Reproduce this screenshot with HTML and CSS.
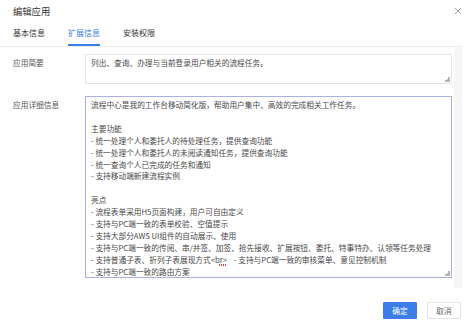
FILE: index.html
```html
<!DOCTYPE html>
<html lang="zh-CN">
<head>
    <meta charset="UTF-8">
    <title>编辑应用</title>
    <link rel="stylesheet" href="styles.css">
</head>
<body>

<div class="dialog">
    <div class="dialog-header">
        <span class="dialog-title">编辑应用</span>
        <svg class="close" width="8" height="8" viewBox="0 0 8 8">
            <path d="M1 1L7 7M7 1L1 7" stroke="#999" stroke-width="0.9" fill="none"/>
        </svg>
    </div>

    <!-- 标签页 -->
    <div class="tabs">
        <span class="tab">基本信息</span>
        <span class="tab active">扩展信息</span>
        <span class="tab">安装权限</span>
    </div>

    <div class="dialog-body">
        <div class="form">
            <div class="form-row">
                <label class="form-label">应用简要</label>
                <div class="textarea short">列出、查询、办理与当前登录用户相关的流程任务。</div>
            </div>
            <div class="form-row">
                <label class="form-label">应用详细信息</label>
                <div class="textarea long focused">流程中心是我的工作台移动简化版，帮助用户集中、高效的完成相关工作任务。

主要功能
- 统一处理个人和委托人的待处理任务，提供查询功能
- 统一处理个人和委托人的未阅读通知任务，提供查询功能
- 统一查询个人已完成的任务和通知
- 支持移动端新建流程实例

亮点
- 流程表单采用H5页面构建，用户可自由定义
- 支持与PC端一致的表单校验、空值提示
- 支持大部分AWS UI组件的自动展示、使用
- 支持与PC端一致的传阅、串/并签、加签、抢先接收、扩展按钮、委托、特事特办、认领等任务处理
- 支持普通子表、折列子表展现方式&lt;br&gt;    - 支持与PC端一致的审核菜单、意见控制机制
- 支持与PC端一致的路由方案</div>
                <span class="typo"></span>
            </div>
        </div>
        <div class="scroll-track"></div>
    </div>

    <div class="dialog-footer">
        <button class="btn primary">确定</button>
        <button class="btn">取消</button>
    </div>
</div>

</body>
</html>
```

FILE: styles.css
```css
body {
    margin: 0;
    font-family: "Noto Sans CJK SC", "Noto Sans", sans-serif;
    background-color: #fff;
}
.dialog {
    width: 474px;
    height: 330px;
    background-color: #fff;
}
.dialog-header {
    display: flex;
    justify-content: space-between;
    align-items: center;
    height: 21px;
    padding: 0 12px 0 13px;
}
.dialog-title {
    font-size: 9.3px;
    color: #333;
}
.close {
    margin-top: 1px;
}
.tabs {
    display: flex;
    gap: 23px;
    height: 25px;
    margin-right: 11px;
    padding-left: 13px;
    border-bottom: 1px solid #eee;
}
.tab {
    font-size: 8px;
    line-height: 24px;
    color: #333;
}
.tab.active {
    color: #3a7de6;
    border-bottom: 2px solid #3a7de6;
}
.dialog-body {
    display: flex;
    height: 241px;
}
.form {
    flex: 1;
    padding-top: 7px;
}
.form-row {
    position: relative;
    display: flex;
    margin-bottom: 12px;
}
.form-label {
    width: 72px;
    padding-left: 13px;
    padding-top: 3px;
    font-size: 7.7px;
    line-height: 12px;
    color: #555;
}
.textarea {
    position: relative;
    width: 355px;
    padding: 2px 5px;
    border: 1px solid #e6e6e6;
    font-size: 7.7px;
    line-height: 11.9px;
    color: #484848;
    white-space: pre-wrap;
    overflow: hidden;
}
.textarea.short {
    height: 24px;
    border-bottom-color: #e2ebdc;
}
.textarea.long {
    height: 176px;
}
.textarea.focused {
    border-color: #a9b0e2;
}
/* 右下角的拖动手柄 */
.textarea::after {
    content: "";
    position: absolute;
    right: 1px;
    bottom: 1px;
    width: 6px;
    height: 6px;
    background: linear-gradient(135deg, transparent 50%, #b5b5b5 50%);
}
/* 拼写检查的红色波浪线，压在 <br> 的 br 下面 */
.typo {
    position: absolute;
    left: 219px;
    top: 168px;
    width: 8px;
    height: 2px;
    background: repeating-linear-gradient(90deg, #e04040 0 1px, transparent 1px 2px);
}
.scroll-track {
    width: 8px;
    margin: 0 12px 0 1px;
    background-color: #f6f6f6;
}
.dialog-footer {
    display: flex;
    justify-content: flex-end;
    gap: 10px;
    padding: 14px 13px 0 0;
}
.btn {
    width: 34px;
    height: 17px;
    padding: 0;
    font-family: inherit;
    font-size: 7.7px;
    color: #666;
    background-color: #fff;
    border: 1px solid #e3e3e3;
    border-radius: 1px;
}
.btn.primary {
    color: #fff;
    background-color: #3d7de8;
    border-color: #3d7de8;
}
```
